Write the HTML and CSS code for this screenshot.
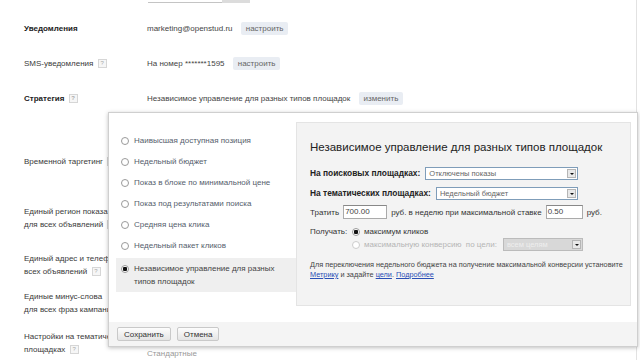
FILE: index.html
```html
<!DOCTYPE html>
<html lang="ru">
<head>
    <meta charset="UTF-8">
    <meta name="viewport" content="width=device-width, initial-scale=1.0">
    <title>Параметры кампании</title>
    <link rel="stylesheet" href="styles.css">
</head>
<body>

    <div class="page">
        <div class="top-rest">
            <span class="top-input"></span>
            <span class="top-btn"></span>
        </div>

        <div class="settings">
            <div class="label bold">Уведомления</div>
            <div class="value">marketing@openstud.ru <span class="small-btn">настроить</span></div>

            <div class="label">SMS-уведомления <span class="help">?</span></div>
            <div class="value">На номер *******1595 <span class="small-btn">настроить</span></div>

            <div class="label bold">Стратегия <span class="help">?</span></div>
            <div class="value">Независимое управление для разных типов площадок <span class="small-btn">изменить</span></div>

            <div class="label">Временной таргетинг <span class="help">?</span></div>
            <div class="value"></div>

            <div class="label">Единый регион показа<br>для всех объявлений <span class="help">?</span></div>
            <div class="value"></div>

            <div class="label">Единый адрес и телефон для<br>всех объявлений <span class="help">?</span></div>
            <div class="value"></div>

            <div class="label">Единые минус-слова<br>для всех фраз кампании</div>
            <div class="value"></div>

            <div class="label">Настройки на тематических<br>площадках <span class="help">?</span></div>
            <div class="value muted">Стандартные</div>
        </div>
    </div>

    <div class="popup">
        <div class="popup-body">
            <ul class="strategies">
                <li><span class="radio"></span>Наивысшая доступная позиция</li>
                <li><span class="radio"></span>Недельный бюджет</li>
                <li><span class="radio"></span>Показ в блоке по минимальной цене</li>
                <li><span class="radio"></span>Показ под результатами поиска</li>
                <li><span class="radio"></span>Средняя цена клика</li>
                <li><span class="radio"></span>Недельный пакет кликов</li>
                <li class="selected"><span class="radio checked"></span>Независимое управление для разных типов площадок</li>
            </ul>

            <div class="panel">
                <h3>Независимое управление для разных типов площадок</h3>

                <div class="field">
                    <b>На поисковых площадках:</b>
                    <div class="select wide1"><span>Отключены показы</span><i class="arrow"></i></div>
                </div>
                <div class="field">
                    <b>На тематических площадках:</b>
                    <div class="select wide2"><span>Недельный бюджет</span><i class="arrow"></i></div>
                </div>
                <div class="field spend">
                    Тратить
                    <span class="input w1">700.00</span>
                    руб. в неделю при максимальной ставке
                    <span class="input w2">0.50</span>
                    руб.
                </div>

                <div class="get">
                    <span class="get-label">Получать:</span>
                    <div class="get-options">
                        <div class="opt"><span class="radio checked"></span>максимум кликов</div>
                        <div class="opt disabled"><span class="radio"></span>максимальную конверсию &nbsp;по цели:
                            <div class="select off"><span>всем целям</span><i class="arrow"></i></div>
                        </div>
                    </div>
                </div>

                <p class="note">Для переключения недельного бюджета на получение максимальной конверсии установите<br>
                    <a href="#">Метрику</a> и задайте <a href="#">цели</a>. <a href="#">Подробнее</a></p>
            </div>
        </div>

        <div class="popup-footer">
            <button>Сохранить</button>
            <button>Отмена</button>
        </div>
    </div>

</body>
</html>
```

FILE: styles.css
```css
body {
    margin: 0;
    width: 640px;
    height: 360px;
    overflow: hidden;
    position: relative;
    background: #fff;
    font-family: "Liberation Sans", Arial, sans-serif;
    font-size: 8px;
    color: #333;
}
.page {
    width: 636px;
    height: 360px;
    border-right: 1px solid #e2e2e2;
}
.top-rest {
    display: flex;
    padding-left: 148px;
    height: 3px;
}
.top-input {
    width: 74px;
    height: 2px;
    border-bottom: 1px solid #c4c4c4;
}
.top-btn {
    width: 28px;
    height: 3px;
    background: #dcdcdc;
}
.settings {
    display: grid;
    grid-template-columns: 123px 1fr;
    grid-template-rows: 35px 35px 63px 50px 47px 38px 40px auto;
    padding: 19px 0 0 24px;
    line-height: 13px;
}
.label {
    color: #3a3a3a;
    white-space: nowrap;
}
.bold {
    font-weight: bold;
    color: #222;
}
.value {
    color: #444;
    white-space: nowrap;
}
.muted {
    color: #999;
    padding-top: 17px;
}
.small-btn {
    display: inline-block;
    margin-left: 6px;
    padding: 0 5px;
    line-height: 13px;
    background: #e9edf3;
    color: #666;
    border-radius: 2px;
}
.help {
    display: inline-block;
    width: 7px;
    height: 7px;
    line-height: 7px;
    font-size: 6px;
    text-align: center;
    color: #aaa;
    border: 1px solid #d6d6d6;
    background: #f6f6f6;
    vertical-align: middle;
    margin-left: 2px;
}

/* окно выбора стратегии */
.popup {
    position: absolute;
    left: 108px;
    top: 112px;
    width: 528px;
    height: 233px;
    background: #fff;
    border: 1px solid #cfcfcf;
    box-shadow: 0 1px 4px rgba(0, 0, 0, 0.25);
    display: flex;
    flex-direction: column;
}
.popup-body {
    display: flex;
    flex: 1;
}
.strategies {
    list-style: none;
    margin: 0;
    padding: 17px 0 0 7px;
    width: 180px;
    color: #55606c;
}
.strategies li {
    display: flex;
    align-items: flex-start;
    line-height: 21px;
    padding-left: 5px;
}
.strategies li.selected {
    margin-top: 2px;
    padding: 4px 14px 4px 5px;
    line-height: 13px;
    background: #efefef;
    color: #444;
}
.radio {
    flex: none;
    display: inline-block;
    width: 6px;
    height: 6px;
    border: 1px solid #9a9a9a;
    border-radius: 50%;
    background: #fff;
    margin: 7px 5px 0 0;
}
.selected .radio {
    margin-top: 3px;
}
.radio.checked {
    background: radial-gradient(circle, #111 0 2px, #fff 2.5px);
}
.panel {
    flex: 1;
    margin: 9px 6px 0 0;
    height: 184px;
    background: #f3f3f3;
    border: 1px solid #e4e4e4;
    padding: 16px 0 0 13px;
    box-sizing: border-box;
    color: #333;
}
.panel h3 {
    margin: 0 0 8px;
    font-size: 11.5px;
    font-weight: normal;
    color: #222;
    line-height: 16px;
}
.field {
    display: flex;
    align-items: center;
    gap: 5px;
    height: 20px;
    white-space: nowrap;
}
.field b {
    color: #222;
    font-size: 8.4px;
}
.spend {
    height: 18px;
    gap: 4px;
}
.select {
    display: flex;
    align-items: center;
    justify-content: space-between;
    height: 11px;
    border: 1px solid #7f9db9;
    background: #fff;
    padding-left: 3px;
    color: #666;
    font-size: 7.5px;
}
.wide1 {
    width: 148px;
}
.wide2 {
    width: 137px;
}
.arrow {
    width: 9px;
    height: 9px;
    margin-right: 1px;
    background: #e8e8e8;
    border: 1px solid #b5b5b5;
    box-sizing: border-box;
    position: relative;
}
.arrow::after {
    content: "";
    position: absolute;
    left: 2px;
    top: 3px;
    border: 2px solid transparent;
    border-top: 2px solid #111;
}
.input {
    display: inline-block;
    height: 12px;
    line-height: 12px;
    border: 1px solid #aaa;
    border-top-color: #888;
    background: #fff;
    padding-left: 1px;
    color: #444;
}
.w1 {
    width: 41px;
}
.w2 {
    width: 34px;
}
.get {
    display: flex;
    margin-top: 4px;
}
.get-label {
    width: 42px;
    line-height: 13px;
}
.get-options .opt {
    display: flex;
    align-items: center;
    height: 13px;
    white-space: nowrap;
}
.get-options .radio {
    margin: 0 4px 0 0;
}
.opt.disabled {
    color: #b5b5b5;
}
.opt.disabled .radio {
    border-color: #ccc;
}
.select.off {
    width: 75px;
    margin-left: 6px;
    background: #d8d8d8;
    border-color: #bbb;
    color: #eee;
}
.note {
    margin: 9px 0 0;
    font-size: 7.3px;
    line-height: 10px;
    color: #444;
    white-space: nowrap;
}
.note a {
    color: #2a4fb5;
}
.popup-footer {
    height: 24px;
    background: #f4f4f4;
    display: flex;
    align-items: center;
    gap: 6px;
    padding-left: 8px;
}
.popup-footer button {
    font-family: inherit;
    font-size: 8px;
    color: #333;
    height: 14px;
    padding: 0 6px;
    border: 1px solid #c9c9c9;
    border-radius: 2px;
    background: linear-gradient(#fdfdfd, #e4e4e4);
}
```
